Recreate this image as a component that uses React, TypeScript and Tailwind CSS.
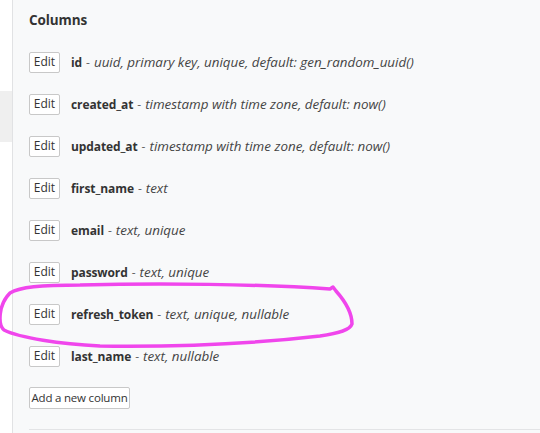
import React from "react";

const rows: { name: string; desc: string }[] = [
  { name: "id", desc: "uuid, primary key, unique, default: gen_random_uuid()" },
  { name: "created_at", desc: "timestamp with time zone, default: now()" },
  { name: "updated_at", desc: "timestamp with time zone, default: now()" },
  { name: "first_name", desc: "text" },
  { name: "email", desc: "text, unique" },
  { name: "password", desc: "text, unique" },
  { name: "refresh_token", desc: "text, unique, nullable" },
  { name: "last_name", desc: "text, nullable" },
];

export default function App() {
  return (
    <div
      className="relative flex h-[433px] w-[540px] overflow-hidden bg-[#f8f9fa]"
      style={{ fontFamily: '"Open Sans", "Noto Sans", sans-serif' }}
    >
      <div className="flex w-[13px] shrink-0 flex-col border-r border-[#e1e2e4] bg-white">
        <div className="h-[91px]" />
        <div className="h-[51px] bg-[#efefef]" />
      </div>
      <div className="flex flex-1 flex-col pl-4">
        <div className="flex h-[41px] items-center">
          <h2 className="text-[13.5px] font-bold tracking-[-0.1px] text-[#333]">Columns</h2>
        </div>
        {rows.map((r) => (
          <div key={r.name} className="flex h-[42px] items-center">
            <button className="flex h-[21px] w-[31px] items-center justify-center rounded-[2px] border border-[#c8c8c8] bg-white text-[12px] text-[#333]">
              Edit
            </button>
            <div className="ml-[11px] flex items-baseline whitespace-nowrap text-[12px] text-[#444]">
              <span className="font-bold tracking-[-0.1px] text-[#333]">{r.name}</span>
              <span className="px-[4px] text-[#666]">-</span>
              <span className="text-[13.4px] italic text-[#444]">{r.desc}</span>
            </div>
          </div>
        ))}
        <div className="mt-[10px]">
          <button className="flex h-[22px] w-[101px] items-center justify-center rounded-[2px] border border-[#c8c8c8] bg-white text-[11.5px] tracking-[-0.2px] text-[#333]">
            Add a new column
          </button>
        </div>
        <div className="mt-[20px] border-t border-[#e3e4e6]" />
      </div>
      <svg
        className="pointer-events-none absolute left-0 top-0"
        width="540"
        height="433"
        viewBox="0 0 540 433"
      >
        <path
          d="M 10 293 C 20 287, 40 285, 80 285 C 160 283, 260 284, 330 289 L 333 287 L 336 291 C 344 300, 352 312, 352 324 C 350 330, 340 333, 320 336 C 260 343, 180 347, 100 346 C 60 344, 20 338, 4 330 C -2 325, -2 305, 10 293 Z"
          fill="none"
          stroke="#f046ec"
          strokeWidth="3.5"
          strokeLinecap="round"
          strokeLinejoin="round"
        />
      </svg>
    </div>
  );
}
